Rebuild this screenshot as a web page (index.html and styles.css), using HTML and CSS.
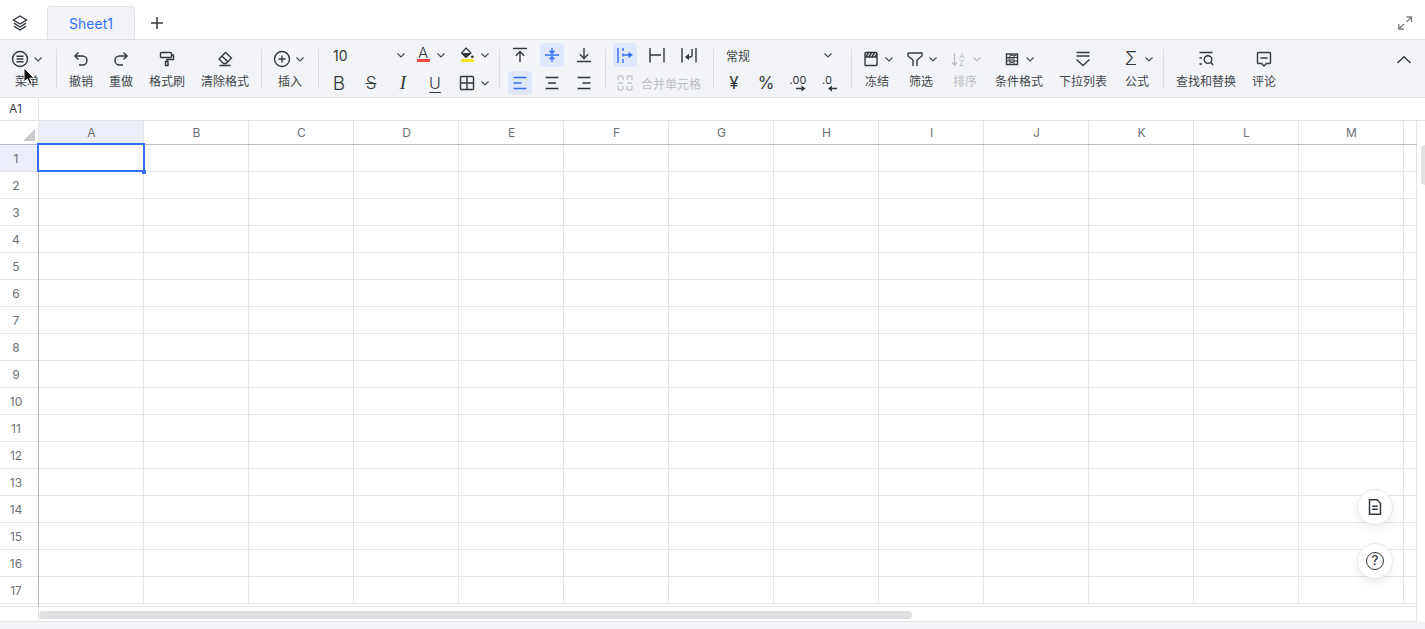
FILE: index.html
```html
<!DOCTYPE html>
<html lang="zh">
<head>
<meta charset="utf-8">
<title>Sheet1</title>
<link rel="stylesheet" href="styles.css">
</head>
<body>

<svg class="defs" width="0" height="0">
  <symbol id="chev" viewBox="0 0 12 12"><path d="M2.500 4.500 6 8l3.500-3.500" fill="none" stroke="currentColor" stroke-width="1.100"/></symbol>
</svg>

<!-- tabs -->
<div class="tabbar">
  <svg class="layers" width="18" height="18" viewBox="0 0 18 18"><path d="M9 2 15.500 6 9 10 2.500 6Z M3 9.200 9 13l6-3.800 M3 12.200 9 16l6-3.800"/></svg>
  <div class="tab">Sheet1</div>
  <svg class="add" width="16" height="16" viewBox="0 0 16 16"><path d="M8 2v12M2 8h12"/></svg>
  <svg class="expand" width="16" height="16" viewBox="0 0 16 16"><path d="M9.500 2h5v5M14 2.500 9.500 7M1.800 9v5h5M2.300 13.500 7 9"/></svg>
</div>

<!-- toolbar -->
<div class="toolbar">
  <div class="group g-menu">
    <div class="tool">
      <div class="tool-top">
        <svg class="ico" viewBox="0 0 20 20"><circle cx="10" cy="10" r="7.500"/><path d="M6.500 7.200h7M6.500 10h7M6.500 12.800h7"/></svg>
        <svg class="chev"><use href="#chev"/></svg>
      </div>
      <span>菜单</span>
    </div>
  </div>
  <div class="sep"></div>
  <div class="group g-edit">
    <div class="tool">
      <div class="tool-top"><svg class="ico" viewBox="0 0 20 20"><path d="M7.500 3.500 4 7l3.500 3.500M4 7h7.500a4.500 4.500 0 0 1 0 9H8"/></svg></div>
      <span>撤销</span>
    </div>
    <div class="tool">
      <div class="tool-top"><svg class="ico" viewBox="0 0 20 20"><path d="M12.500 3.500 16 7l-3.500 3.500M16 7H8.500a4.500 4.500 0 0 0 0 9H12"/></svg></div>
      <span>重做</span>
    </div>
    <div class="tool">
      <div class="tool-top"><svg class="ico" viewBox="0 0 20 20"><path d="M4.500 3.500h9a1 1 0 0 1 1 1v3a1 1 0 0 1-1 1h-9a1 1 0 0 1-1-1v-3a1 1 0 0 1 1-1ZM14.500 6h2v4.500h-6.500v2M8.500 12.500h2.500v4h-2.500z"/></svg></div>
      <span>格式刷</span>
    </div>
    <div class="tool">
      <div class="tool-top"><svg class="ico" viewBox="0 0 20 20"><path d="M10.500 3.500 16.500 9 11 14.500H8.500L4 10ZM7 7.200 13 12.800M4.500 16.500h11"/></svg></div>
      <span>清除格式</span>
    </div>
  </div>
  <div class="sep"></div>
  <div class="group g-insert">
    <div class="tool">
      <div class="tool-top">
        <svg class="ico" viewBox="0 0 20 20"><circle cx="10" cy="10" r="7.500"/><path d="M10 6.500v7M6.500 10h7"/></svg>
        <svg class="chev"><use href="#chev"/></svg>
      </div>
      <span>插入</span>
    </div>
  </div>
  <div class="sep"></div>

  <div class="stack g-font">
    <div class="line">
      <div class="select sel-size">10<svg class="chev"><use href="#chev"/></svg></div>
      <div class="combo">
        <div class="btn color-a">A<i class="swatch red"></i></div>
        <svg class="chev"><use href="#chev"/></svg>
      </div>
      <div class="combo">
        <div class="btn color-fill">
          <svg class="fill-ico" width="16" height="13" viewBox="0 0 16 13"><path d="M7 1 12 6 7 10.500 2.500 6Z"/><path class="solid" d="M2.500 6h9.500L7 10.500Z"/><circle class="solid" cx="13.300" cy="9.800" r="1.400"/></svg>
          <i class="swatch yellow"></i>
        </div>
        <svg class="chev"><use href="#chev"/></svg>
      </div>
    </div>
    <div class="line">
      <div class="btn glyph">B</div>
      <div class="btn glyph strike">S</div>
      <div class="btn glyph ital">I</div>
      <div class="btn glyph under">U</div>
      <div class="combo">
        <div class="btn"><svg class="ico" viewBox="0 0 20 20"><rect x="3.500" y="3.500" width="13" height="13" rx="1"/><path d="M10 3.500v13M3.500 10h13"/></svg></div>
        <svg class="chev"><use href="#chev"/></svg>
      </div>
    </div>
  </div>
  <div class="sep"></div>

  <div class="stack g-align">
    <div class="line">
      <div class="btn"><svg class="ico" viewBox="0 0 20 20"><path d="M3 3.500h14M10 17V7M5.800 10.800 10 6.600l4.200 4.200"/></svg></div>
      <div class="btn on"><svg class="ico" viewBox="0 0 20 20"><path d="M3 10h14M10 3v5M7.500 5.800 10 8.300l2.500-2.500M10 17v-5M7.500 14.200 10 11.700l2.500 2.500"/></svg></div>
      <div class="btn"><svg class="ico" viewBox="0 0 20 20"><path d="M3 16.500h14M10 3v10M5.800 9.200 10 13.400l4.200-4.200"/></svg></div>
    </div>
    <div class="line">
      <div class="btn on"><svg class="ico" viewBox="0 0 20 20"><path d="M3.500 4.500h13M3.500 10h8M3.500 15.500h13"/></svg></div>
      <div class="btn"><svg class="ico" viewBox="0 0 20 20"><path d="M3.500 4.500h13M6 10h8M3.500 15.500h13"/></svg></div>
      <div class="btn"><svg class="ico" viewBox="0 0 20 20"><path d="M3.500 4.500h13M8.500 10h8M3.500 15.500h13"/></svg></div>
    </div>
  </div>
  <div class="sep"></div>

  <div class="stack g-wrap">
    <div class="line">
      <div class="btn on"><svg class="ico" viewBox="0 0 20 20"><path d="M3 3v15M8 3v3M8 8.500v3M8 14v4M8 10h6"/><path class="head" d="M13.500 7 18 10l-4.500 3Z"/></svg></div>
      <div class="btn"><svg class="ico" viewBox="0 0 20 20"><path d="M3 3v14.500M17 3v14.500M3 10h11"/></svg></div>
      <div class="btn"><svg class="ico" viewBox="0 0 20 20"><path d="M3 3v14.500M17 3v14.500M13 4v6.500a1.500 1.500 0 0 1-1.500 1.500H9"/><path class="head" d="M10 8.800 6 12l4 3.200Z"/></svg></div>
    </div>
    <div class="line merge">
      <div class="btn"><svg class="ico" viewBox="0 0 20 20"><path d="M3 7V5a2 2 0 0 1 2-2h1a2 2 0 0 1 2 2v2M12 7V5a2 2 0 0 1 2-2h1a2 2 0 0 1 2 2v2M3 13v2a2 2 0 0 0 2 2h1a2 2 0 0 0 2-2v-2M12 13v2a2 2 0 0 0 2 2h1a2 2 0 0 0 2-2v-2M3 10h5M12 10h5"/></svg></div>
      <span>合并单元格</span>
    </div>
  </div>
  <div class="sep"></div>

  <div class="stack g-num">
    <div class="line">
      <div class="select sel-num">常规<svg class="chev"><use href="#chev"/></svg></div>
    </div>
    <div class="line">
      <div class="btn glyph yen">¥</div>
      <div class="btn glyph pct">%</div>
      <div class="btn dec"><b>.00</b><svg width="16" height="7" viewBox="0 0 16 7"><path d="M6 3.500h6"/><path class="head" d="M11.500.5 15.500 3.500l-4 3Z"/></svg></div>
      <div class="btn dec dec-less"><b>.0</b><svg width="16" height="7" viewBox="0 0 16 7"><path d="M15 3.500H9"/><path class="head" d="M10 .5 6 3.500l4 3Z"/></svg></div>
    </div>
  </div>
  <div class="sep"></div>

  <div class="group g-data">
    <div class="tool">
      <div class="tool-top">
        <svg class="ico" viewBox="0 0 20 20"><rect x="4" y="3.500" width="12" height="13" rx="1"/><path d="M4 8h12M5 7.500 7.500 4M8 7.500 10.500 4M11 7.500 13.500 4M14 7.500 16 5"/></svg>
        <svg class="chev"><use href="#chev"/></svg>
      </div>
      <span>冻结</span>
    </div>
    <div class="tool">
      <div class="tool-top">
        <svg class="ico" viewBox="0 0 20 20"><path d="M3 4h14v3l-5 4v6M3 4v3l5 4v6"/></svg>
        <svg class="chev"><use href="#chev"/></svg>
      </div>
      <span>筛选</span>
    </div>
    <div class="tool off">
      <div class="tool-top">
        <svg class="ico" viewBox="0 0 20 20"><path d="M5.500 4v12M3 13.500l2.500 2.500L8 13.500"/><text x="10" y="9.500">A</text><text x="10" y="17">Z</text></svg>
        <svg class="chev"><use href="#chev"/></svg>
      </div>
      <span>排序</span>
    </div>
    <div class="tool t-cond">
      <div class="tool-top">
        <svg class="ico" viewBox="0 0 20 20"><rect x="4.500" y="5" width="11" height="10.500"/><path class="thin" d="M8 5v10.500M12 5v10.500M4.500 8.500h11M4.500 12h11M9 6.500h2M9 10h2M9 13.500h2M5.500 10h2M12.500 6.500h2"/></svg>
        <svg class="chev"><use href="#chev"/></svg>
      </div>
      <span>条件格式</span>
    </div>
    <div class="tool t-drop">
      <div class="tool-top"><svg class="ico" viewBox="0 0 20 20"><path d="M3.500 3.500h13M3.500 7h13M3.500 10.500 10 16.500l6.500-6"/></svg></div>
      <span>下拉列表</span>
    </div>
    <div class="tool">
      <div class="tool-top">
        <div class="sum">Σ</div>
        <svg class="chev"><use href="#chev"/></svg>
      </div>
      <span>公式</span>
    </div>
  </div>
  <div class="sep"></div>

  <div class="group g-find">
    <div class="tool">
      <div class="tool-top"><svg class="ico" viewBox="0 0 20 20"><path d="M3.500 3.500h13M3.500 9h2.500M3.500 15h2.500"/><circle cx="12" cy="10.500" r="3.800"/><path d="m14.800 13.300 2.200 2.700"/></svg></div>
      <span>查找和替换</span>
    </div>
    <div class="tool">
      <div class="tool-top"><svg class="ico" viewBox="0 0 20 20"><path d="M3.500 4.500a1 1 0 0 1 1-1h11a1 1 0 0 1 1 1v9a1 1 0 0 1-1 1h-3L10 17l-2.500-2.500h-3a1 1 0 0 1-1-1ZM6.500 9h7"/></svg></div>
      <span>评论</span>
    </div>
  </div>

  <svg class="collapse" width="16" height="16" viewBox="0 0 16 16"><path d="M1.500 11 8 4.800 14.500 11"/></svg>
</div>

<!-- formula bar -->
<div class="formula">
  <div class="cell-name">A1</div>
</div>

<!-- sheet -->
<div class="sheet-head">
  <div class="corner"><i></i></div>
  <div class="col sel">A</div>
  <div class="col">B</div>
  <div class="col">C</div>
  <div class="col">D</div>
  <div class="col">E</div>
  <div class="col">F</div>
  <div class="col">G</div>
  <div class="col">H</div>
  <div class="col">I</div>
  <div class="col">J</div>
  <div class="col">K</div>
  <div class="col">L</div>
  <div class="col">M</div>
  <div class="col-end"></div>
</div>

<div class="sheet-body">
  <div class="rows">
    <div class="row sel">1</div>
    <div class="row">2</div>
    <div class="row">3</div>
    <div class="row">4</div>
    <div class="row">5</div>
    <div class="row">6</div>
    <div class="row">7</div>
    <div class="row">8</div>
    <div class="row">9</div>
    <div class="row">10</div>
    <div class="row">11</div>
    <div class="row">12</div>
    <div class="row">13</div>
    <div class="row">14</div>
    <div class="row">15</div>
    <div class="row">16</div>
    <div class="row">17</div>
  </div>
  <div class="cells">
    <div class="selection"><i></i></div>
    <div class="float-btns">
      <div class="float-btn"><svg width="18" height="18" viewBox="0 0 18 18"><path d="M3.500 1.800h7.500l3.500 3.500v10.900h-11ZM6.200 8.200h5.600M6.200 11.200h5.600"/></svg></div>
      <div class="float-btn"><div class="help">?</div></div>
    </div>
  </div>
  <div class="vscroll"><i></i></div>
</div>

<div class="hbar">
  <div class="hbar-left"></div>
  <div class="hbar-track"><i></i></div>
</div>
<div class="foot"></div>

<svg class="pointer" width="14" height="20" viewBox="0 0 14 20"><path d="M1 1v14l3.400-3 2.400 5.500 2.200-1-2.300-5.300h4.500Z"/></svg>

</body>
</html>
```

FILE: styles.css
```css
body { margin: 0; height: 629px; overflow: hidden; position: relative; background: #fff; font-family: Inter, "Noto Sans CJK SC", sans-serif; font-size: 12px; color: #41464b; }
.defs { position: absolute; }
svg { display: block; flex: none; }

/* tabs */
.tabbar { height: 39px; display: flex; align-items: flex-end; position: relative; }
.layers { margin: 0 0 7px 11px; fill: none; stroke: #33383d; stroke-width: 1.4; }
.tab { width: 88px; height: 33px; margin-left: 18px; box-sizing: border-box; background: #f3f4f7; border: 1px solid #e2e3e7; border-bottom: 0; border-radius: 4px 4px 0 0; color: #3370ff; font-size: 14px; line-height: 33px; text-align: center; }
.add { margin: 0 0 8px 14px; fill: none; stroke: #33383d; stroke-width: 1.5; }
.expand { margin: 0 12px 8px auto; fill: none; stroke: #7d8287; stroke-width: 1.4; }

/* toolbar */
.toolbar { height: 59px; box-sizing: border-box; display: flex; background: #f3f4f7; border-top: 1px solid #dfe0e3; border-bottom: 1px solid #dfe0e3; }
.sep { width: 1px; height: 40px; margin-top: 9px; background: #dcdde0; flex: none; }
.group { display: flex; padding-top: 7px; }
.g-menu { width: 56px; padding-left: 10px; box-sizing: border-box; }
.g-edit { width: 204px; padding-left: 12px; box-sizing: border-box; gap: 16px; }
.g-insert { width: 56px; padding-left: 10px; box-sizing: border-box; }
.g-insert .tool span { margin-left: 2px; }
.g-data { width: 311px; padding-left: 9px; box-sizing: border-box; gap: 10px; }
.g-data .tool span { margin-left: -2px; }
.g-find { padding-left: 12px; gap: 16px; }
.tool { display: flex; flex-direction: column; align-items: center; line-height: 18px; }
.tool span { margin-top: 2px; white-space: nowrap; }
.tool-top { height: 24px; display: flex; align-items: center; gap: 2px; color: #33383d; }
.ico { width: 20px; height: 20px; fill: none; stroke: currentColor; stroke-width: 1.4; }
.ico text { font-family: Inter, sans-serif; font-size: 8px; stroke: none; fill: currentColor; }
.ico .head { fill: currentColor; stroke: none; }
.ico .thin { stroke-width: 1; }
.chev { width: 12px; height: 12px; color: #41464b; }
.off, .off .tool-top, .off .chev { color: #bbbfc4; }
.g-data .t-cond { margin-left: 2px; }
.g-data .t-cond span, .g-data .t-drop span { margin-left: 0; }
.t-drop { margin-left: 6px; margin-right: 4px; }
.sum { width: 20px; text-align: center; font-size: 18px; font-weight: 300; line-height: 20px; }
.collapse { margin: 12px 13px 0 auto; fill: none; stroke: #33383d; stroke-width: 1.4; }

.stack { display: flex; flex-direction: column; gap: 4px; padding-top: 3px; box-sizing: border-box; }
.line { height: 24px; display: flex; align-items: center; gap: 8px; }
.g-font { width: 180px; padding-left: 8px; }
.g-align { width: 105px; padding-left: 8px; }
.g-wrap { width: 107px; padding-left: 7px; }
.g-num { width: 137px; padding-left: 8px; }
.btn { width: 24px; height: 24px; border-radius: 4px; display: flex; align-items: center; justify-content: center; color: #33383d; position: relative; flex: none; }
.btn.on { background: #dfe8fb; color: #3370ff; }
.combo { display: flex; align-items: center; }
.select { display: flex; align-items: center; justify-content: space-between; height: 24px; box-sizing: border-box; }
.sel-size { width: 80px; margin-right: -4px; padding-left: 6px; font-size: 14px; color: #33383d; }
.sel-num { width: 112px; padding-left: 4px; }
.glyph { font-size: 19px; font-weight: 300; }
.strike { font-size: 17px; text-decoration: line-through; text-decoration-thickness: 1px; }
.ital { font-style: italic; font-family: "Liberation Serif", serif; font-size: 19px; }
.under { font-size: 16px; text-decoration: underline; text-decoration-thickness: 1px; text-underline-offset: 3px; }
.yen, .pct { font-size: 17px; font-weight: 400; }
.color-a { font-size: 15px; font-weight: 300; line-height: 18px; align-items: flex-start; padding-top: 1px; box-sizing: border-box; }
.swatch { position: absolute; left: 6px; top: 16px; width: 13px; height: 3px; }
.red { background: #e8483f; }
.yellow { background: #f5e225; }
.color-fill { align-items: flex-start; padding-top: 4px; box-sizing: border-box; }
.fill-ico { fill: none; stroke: #33383d; stroke-width: 1.2; }
.fill-ico .solid { fill: #33383d; stroke: none; }
.merge { gap: 4px; color: #bbbfc4; }
.merge .btn { color: #c4c7cc; }
.merge span { white-space: nowrap; }
.dec { flex-direction: column; }
.dec b { font-weight: 400; font-size: 11px; line-height: 10px; }
.dec-less b { margin-right: 6px; }
.dec svg { fill: none; stroke: #33383d; stroke-width: 1.5; }
.dec .head { fill: #33383d; stroke: none; }

/* formula bar */
.formula { height: 23px; box-sizing: border-box; border-bottom: 1px solid #dfe0e3; }
.cell-name { width: 39px; height: 22px; box-sizing: border-box; border-right: 1px solid #e4e5e8; line-height: 22px; padding-left: 9px; }

/* sheet */
.sheet-head { height: 24px; display: flex; box-sizing: border-box; border-bottom: 1px solid #b9bbc6; width: 1417px; color: #6b7075; }
.corner { width: 39px; box-sizing: border-box; border-right: 1px solid #e4e5e8; position: relative; }
.corner i { position: absolute; left: 23px; top: 8px; border-style: solid; border-width: 0 0 12px 12px; border-color: transparent transparent #c8c9cc transparent; }
.col { width: 105px; box-sizing: border-box; border-right: 1px solid #e4e5e8; text-align: center; line-height: 23px; padding-left: 1px; }
.col.sel { background: #ebeef8; }
.col-end { width: 13px; box-sizing: border-box; border-right: 1px solid #e4e5e8; }

.sheet-body { height: 461px; display: flex; }
.rows { width: 39px; box-sizing: border-box; border-right: 1px solid #b9bbc6; color: #6b7075; flex: none; }
.row { height: 27px; box-sizing: border-box; border-bottom: 1px solid #e4e5e8; line-height: 28px; text-align: center; padding-right: 6px; }
.row.sel { background: #ebeef8; }
.cells { width: 1378px; box-sizing: border-box; border-right: 1px solid #e4e5e8; position: relative; background-image: linear-gradient(to right, transparent 104px, #e4e5e8 104px), linear-gradient(to bottom, transparent 26px, #e4e5e8 26px); background-size: 105px 459px, 100% 27px; background-repeat: repeat-x, repeat-y; }
.selection { position: absolute; left: -2px; top: -2px; width: 108px; height: 29px; box-sizing: border-box; border: 2px solid #3370ff; }
.selection i { position: absolute; right: -3px; bottom: -4px; width: 4px; height: 4px; background: #3370ff; }
.float-btns { position: absolute; right: 23px; bottom: 27px; display: flex; flex-direction: column; gap: 18px; }
.float-btn { width: 36px; height: 36px; box-sizing: border-box; border-radius: 50%; background: #fff; border: 1px solid #e9e9ec; box-shadow: 0 4px 10px rgba(0, 0, 0, .07); display: flex; align-items: center; justify-content: center; }
.float-btn svg { fill: none; stroke: #33383d; stroke-width: 1.5; }
.help { width: 18px; height: 18px; box-sizing: border-box; border: 1.500px solid #33383d; border-radius: 50%; color: #33383d; font-size: 13px; font-weight: 500; line-height: 15px; text-align: center; }
.vscroll { flex: 1; position: relative; }
.vscroll i { position: absolute; left: 4px; top: 0; width: 8px; height: 40px; background: #e3e3e5; border-radius: 4px; }

.hbar { height: 16px; width: 1417px; display: flex; box-sizing: border-box; border-top: 1px solid #e4e5e8; border-bottom: 1px solid #e4e5e8; }
.hbar-left { width: 39px; box-sizing: border-box; border-right: 1px solid #e4e5e8; }
.hbar-track { flex: 1; padding-top: 4px; box-sizing: border-box; border-right: 1px solid #e4e5e8; }
.hbar-track i { display: block; width: 873px; height: 8px; border-radius: 4px; background: #dedfe0; }
.foot { height: 7px; background: #f3f4f7; }

.pointer { position: absolute; left: 23px; top: 67px; fill: #111; stroke: #fff; stroke-width: 1; }
```
